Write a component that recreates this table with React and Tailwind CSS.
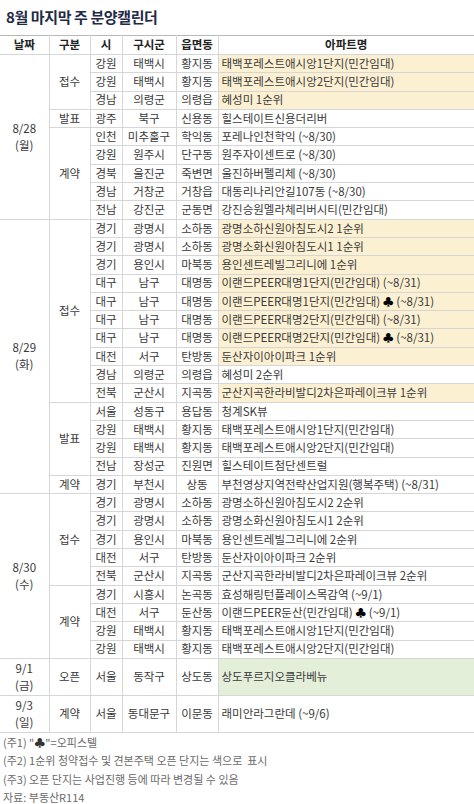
import React from "react";

const data = [
  {
    date: ["8/28", "(월)"],
    groups: [
      {
        type: "접수",
        rows: [
          ["강원", "태백시", "황지동", "태백포레스트애시앙1단지(민간임대)", "y"],
          ["강원", "태백시", "황지동", "태백포레스트애시앙2단지(민간임대)", "y"],
          ["경남", "의령군", "의령읍", "혜성미 1순위", "y"],
        ],
      },
      { type: "발표", rows: [["광주", "북구", "신용동", "힐스테이트신용더리버"]] },
      {
        type: "계약",
        rows: [
          ["인천", "미추홀구", "학익동", "포레나인천학익 (~8/30)"],
          ["강원", "원주시", "단구동", "원주자이센트로 (~8/30)"],
          ["경북", "울진군", "죽변면", "울진하버펠리체 (~8/30)"],
          ["경남", "거창군", "거창읍", "대동리나리안길107동 (~8/30)"],
          ["전남", "강진군", "군동면", "강진승원멜라체리버시티(민간임대)"],
        ],
      },
    ],
  },
  {
    date: ["8/29", "(화)"],
    groups: [
      {
        type: "접수",
        rows: [
          ["경기", "광명시", "소하동", "광명소하신원아침도시2 1순위", "y"],
          ["경기", "광명시", "소하동", "광명소화신원아침도시1 1순위", "y"],
          ["경기", "용인시", "마북동", "용인센트레빌그리니에 1순위", "y"],
          ["대구", "남구", "대명동", "이랜드PEER대명1단지(민간임대) (~8/31)", "y"],
          ["대구", "남구", "대명동", "이랜드PEER대명1단지(민간임대) ♣ (~8/31)", "y"],
          ["대구", "남구", "대명동", "이랜드PEER대명2단지(민간임대) (~8/31)", "y"],
          ["대구", "남구", "대명동", "이랜드PEER대명2단지(민간임대) ♣ (~8/31)", "y"],
          ["대전", "서구", "탄방동", "둔산자이아이파크 1순위", "y"],
          ["경남", "의령군", "의령읍", "혜성미 2순위"],
          ["전북", "군산시", "지곡동", "군산지곡한라비발디2차은파레이크뷰 1순위", "y"],
        ],
      },
      {
        type: "발표",
        rows: [
          ["서울", "성동구", "용답동", "청계SK뷰"],
          ["강원", "태백시", "황지동", "태백포레스트애시앙1단지(민간임대)"],
          ["강원", "태백시", "황지동", "태백포레스트애시앙2단지(민간임대)"],
          ["전남", "장성군", "진원면", "힐스테이트첨단센트럴"],
        ],
      },
      {
        type: "계약",
        rows: [["경기", "부천시", "상동", "부천영상지역전략산업지원(행복주택) (~8/31)"]],
      },
    ],
  },
  {
    date: ["8/30", "(수)"],
    groups: [
      {
        type: "접수",
        rows: [
          ["경기", "광명시", "소하동", "광명소하신원아침도시2 2순위"],
          ["경기", "광명시", "소하동", "광명소화신원아침도시1 2순위"],
          ["경기", "용인시", "마북동", "용인센트레빌그리니에 2순위"],
          ["대전", "서구", "탄방동", "둔산자이아이파크 2순위"],
          ["전북", "군산시", "지곡동", "군산지곡한라비발디2차은파레이크뷰 2순위"],
        ],
      },
      {
        type: "계약",
        rows: [
          ["경기", "시흥시", "논곡동", "효성해링턴플레이스목감역 (~9/1)"],
          ["대전", "서구", "둔산동", "이랜드PEER둔산(민간임대) ♣ (~9/1)"],
          ["강원", "태백시", "황지동", "태백포레스트애시앙1단지(민간임대)"],
          ["강원", "태백시", "황지동", "태백포레스트애시앙2단지(민간임대)"],
        ],
      },
    ],
  },
  {
    date: ["9/1", "(금)"],
    tall: true,
    groups: [{ type: "오픈", rows: [["서울", "동작구", "상도동", "상도푸르지오클라베뉴", "g"]] }],
  },
  {
    date: ["9/3", "(일)"],
    tall: true,
    groups: [{ type: "계약", rows: [["서울", "동대문구", "이문동", "래미안라그란데 (~9/6)"]] }],
  },
];

const cell = "border-b border-r border-[#d6d6d6] text-center align-middle p-0";

function Apt({ text }) {
  const parts = text.split("♣");
  if (parts.length === 1) return text;
  return (
    <>
      {parts[0]}
      <span className="text-black text-[11px]">♣</span>
      {parts[1]}
    </>
  );
}

export default function App() {
  const rows = [];
  data.forEach((block, bi) => {
    const total = block.groups.reduce((s, g) => s + g.rows.length, 0);
    let first = true;
    block.groups.forEach((g, gi) => {
      g.rows.forEach((r, ri) => {
        const bg =
          r[4] === "y" ? "bg-[#fcf0d3]" : r[4] === "g" ? "bg-[#e4efda]" : "bg-white";
        rows.push(
          <tr
            key={`${bi}-${gi}-${ri}`}
            className={block.tall ? "h-[37px]" : "h-[18.3px]"}
          >
            {first && (
              <td rowSpan={total} className={`${cell} leading-[17px]`}>
                <div>{block.date[0]}</div>
                <div>{block.date[1]}</div>
              </td>
            )}
            {ri === 0 && (
              <td rowSpan={g.rows.length} className={cell}>
                {g.type}
              </td>
            )}
            <td className={cell}>{r[0]}</td>
            <td className={cell}>{r[1]}</td>
            <td className={cell}>{r[2]}</td>
            <td
              className={`border-b border-[#d6d6d6] text-left align-middle py-0 pl-[3px] pr-0 whitespace-nowrap ${bg}`}
            >
              <Apt text={r[3]} />
            </td>
          </tr>
        );
        first = false;
      });
    });
  });

  return (
    <div className="w-[474px] bg-white font-['Noto_Sans_CJK_KR','Noto_Sans',sans-serif] text-[#3a3a3a]">
      <div className="h-[35px] flex items-center pl-[6px] pb-[1px]">
        <h1 className="text-[15px] font-bold text-[#1f2b48] tracking-[-0.4px]">
          8월 마지막 주 분양캘린더
        </h1>
      </div>
      <table className="w-[474px] table-fixed border-collapse text-[11.5px] leading-none">
        <colgroup>
          <col className="w-[49px]" />
          <col className="w-[41px]" />
          <col className="w-[32px]" />
          <col className="w-[54px]" />
          <col className="w-[42px]" />
          <col />
        </colgroup>
        <thead>
          <tr className="h-[19px] font-bold text-[#222]">
            {["날짜", "구분", "시", "구시군", "읍면동"].map((h) => (
              <th
                key={h}
                className="border-t border-t-[#b8b8b8] border-b border-r border-[#d6d6d6] text-center align-middle p-0 font-bold"
              >
                {h}
              </th>
            ))}
            <th className="border-t border-t-[#b8b8b8] border-b border-[#d6d6d6] text-center align-middle p-0 font-bold">
              아파트명
            </th>
          </tr>
        </thead>
        <tbody>{rows}</tbody>
      </table>
      <div className="text-[11px] leading-[18.5px] text-[#6b6b6b] pl-[3px]">
        <div>
          (주1) "<span className="text-[#333]">♣</span>"=오피스텔
        </div>
        <div>(주2) 1순위 청약접수 및 견본주택 오픈 단지는 색으로&nbsp; 표시</div>
        <div>(주3) 오픈 단지는 사업진행 등에 따라 변경될 수 있음</div>
        <div className="mt-[3px] leading-[12px]">자료: 부동산R114</div>
      </div>
    </div>
  );
}
